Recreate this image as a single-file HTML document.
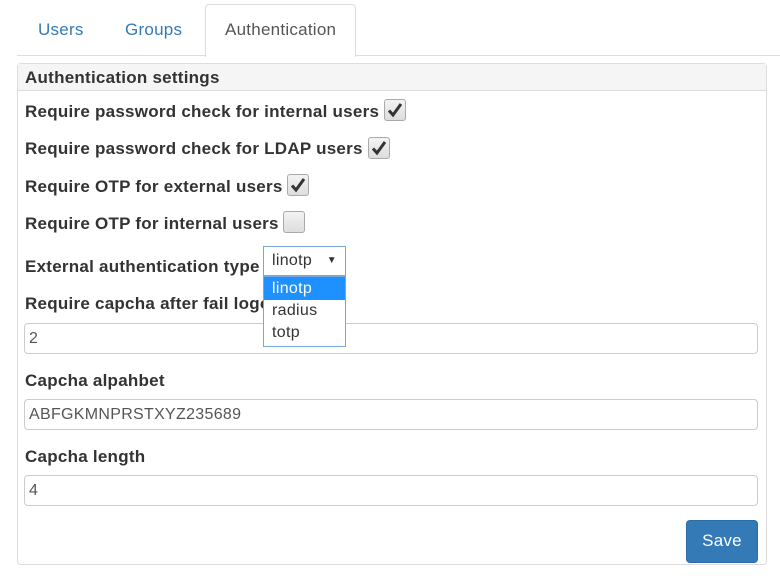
<!DOCTYPE html><html><head><style>
body{margin:0;width:780px;height:586px;background:#fff;font-family:"Liberation Sans",Arial,sans-serif;color:#333;position:relative;overflow:hidden;letter-spacing:0.25px}
.a{position:absolute}
.tab{position:absolute;top:20px;font-size:17px;color:#337ab7}
.lbl{position:absolute;left:25px;font-size:17px;font-weight:bold;color:#333;white-space:nowrap;margin-top:1px}
.cb{position:absolute;width:20px;height:20px;border:1px solid #aaa;border-radius:3px;background:linear-gradient(#f3f3f3,#ddd)}
.cb svg{position:absolute;left:2px;top:2px}
.inp{position:absolute;left:24px;border:1px solid #ccc;border-radius:4px;font-size:16px;line-height:29px;padding-left:4px;box-sizing:border-box;width:734px;height:31px;color:#555;letter-spacing:0.3px}
</style></head><body>
<div class="a" style="left:17px;top:55px;width:763px;height:1px;background:#ddd"></div>
<div class="a" style="left:205px;top:4px;width:149px;height:52px;border:1px solid #ddd;border-bottom:none;border-radius:4px 4px 0 0;background:#fff"></div>
<div class="tab" style="left:38px">Users</div>
<div class="tab" style="left:125px">Groups</div>
<div class="tab" style="left:225px;color:#555">Authentication</div>
<div class="a" style="left:17px;top:63px;width:748px;height:500px;border:1px solid #ddd;border-radius:4px"></div>
<div class="a" style="left:18px;top:64px;width:748px;height:26px;background:#f5f5f5;border-bottom:1px solid #ddd"></div>
<div class="lbl" style="top:67px">Authentication settings</div>
<div class="lbl" style="top:101px">Require password check for internal users</div>
<div class="cb" style="left:384px;top:99px"><svg width="16" height="16" viewBox="0 0 16 16"><path d="M2 8.5L6 13L14 2" stroke="#333" stroke-width="3" fill="none"/></svg></div>
<div class="lbl" style="top:138px">Require password check for LDAP users</div>
<div class="cb" style="left:368px;top:137px"><svg width="16" height="16" viewBox="0 0 16 16"><path d="M2 8.5L6 13L14 2" stroke="#333" stroke-width="3" fill="none"/></svg></div>
<div class="lbl" style="top:176px">Require OTP for external users</div>
<div class="cb" style="left:287px;top:174px"><svg width="16" height="16" viewBox="0 0 16 16"><path d="M2 8.5L6 13L14 2" stroke="#333" stroke-width="3" fill="none"/></svg></div>
<div class="lbl" style="top:213px">Require OTP for internal users</div>
<div class="cb" style="left:283px;top:211px"></div>
<div class="lbl" style="top:256px">External authentication type</div>
<div class="lbl" style="top:293px">Require capcha after fail logon</div>
<div class="inp" style="top:323px">2</div>
<div class="lbl" style="top:370px">Capcha alpahbet</div>
<div class="inp" style="top:399px">ABFGKMNPRSTXYZ235689</div>
<div class="lbl" style="top:446px">Capcha length</div>
<div class="inp" style="top:475px">4</div>
<div class="a" style="left:686px;top:520px;width:72px;height:43px;background:#337ab7;border:1px solid #2e6da4;border-radius:4px;box-sizing:border-box;color:#fff;font-size:17px;text-align:center;line-height:40px">Save</div>
<div class="a" style="left:263px;top:246px;width:83px;height:30px;border:1px solid #7aa7d9;background:#fff;box-sizing:border-box;font-size:16px;padding-left:8px;line-height:28px;letter-spacing:0.3px">linotp<span style="position:absolute;right:8px;font-size:10px">▼</span></div>
<div class="a" style="left:263px;top:276px;width:83px;height:71px;border:1px solid #7aa7d9;background:#fff;box-sizing:border-box;font-size:16px;letter-spacing:0.3px"><div style="background:#1e90ff;color:#fff;padding-left:8px;height:23px;line-height:23px">linotp</div><div style="padding-left:8px;height:22px;line-height:22px">radius</div><div style="padding-left:8px;height:22px;line-height:22px">totp</div></div>
</body></html>
